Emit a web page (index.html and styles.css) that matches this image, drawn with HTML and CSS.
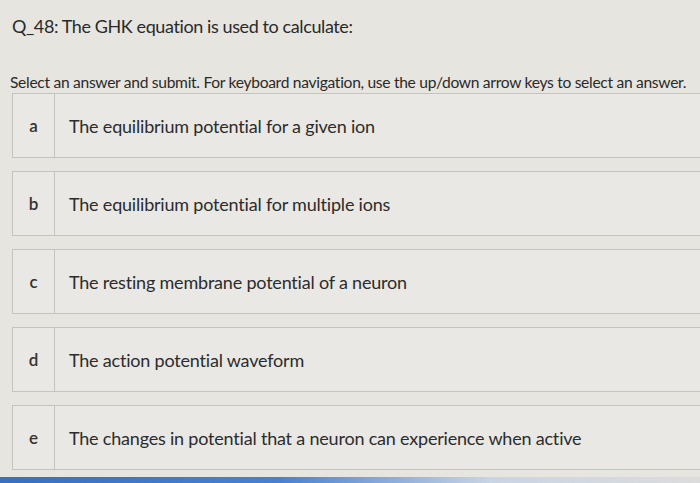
FILE: index.html
```html
<!DOCTYPE html>
<html>
<head>
<meta charset="utf-8">
<link rel="stylesheet" href="styles.css">
</head>
<body>
<div class="page">
  <h1 class="title">Q_48: The GHK equation is used to calculate:</h1>
  <p class="hint">Select an answer and submit. For keyboard navigation, use the up/down arrow keys to select an answer.</p>
  <div class="options">
    <div class="opt"><div class="key">a</div><div class="label">The equilibrium potential for a given ion</div></div>
    <div class="opt"><div class="key">b</div><div class="label">The equilibrium potential for multiple ions</div></div>
    <div class="opt"><div class="key">c</div><div class="label">The resting membrane potential of a neuron</div></div>
    <div class="opt"><div class="key">d</div><div class="label">The action potential waveform</div></div>
    <div class="opt"><div class="key">e</div><div class="label">The changes in potential that a neuron can experience when active</div></div>
  </div>
</div>
<div class="taskbar"></div>
</body>
</html>
```
FILE: styles.css
```css
html, body {
  margin: 0;
  padding: 0;
  width: 700px;
  height: 483px;
  overflow: hidden;
  background: #e7e5e0;
  font-family: Lato, "Liberation Sans", sans-serif;
  color: #2e2e2e;
}
.page {
  box-sizing: border-box;
  padding: 14px 0 0 12px;
  height: 477px;
}
.title {
  margin: 0;
  font-size: 18px;
  font-weight: 400;
  letter-spacing: -0.4px;
  line-height: 24px;
  color: #2a2a2a;
}
.hint {
  margin: 35px 0 0 -2px;
  font-size: 15.6px;
  line-height: 18px;
  letter-spacing: -0.3px;
  color: #2a2a2a;
}
.options {
  display: flex;
  flex-direction: column;
  gap: 13px;
  margin-top: 2px;
  margin-right: -20px;
}
.opt {
  display: flex;
  height: 63px;
  border: 1px solid #c4c3be;
  background: #e9e8e4;
}
.key {
  width: 41px;
  border-right: 1px solid #c4c3be;
  display: flex;
  align-items: center;
  justify-content: center;
  font-size: 17px;
  font-weight: 600;
  color: #333;
}
.label {
  display: flex;
  align-items: center;
  padding-left: 14px;
  font-size: 18px;
  letter-spacing: -0.2px;
  color: #2c2c2c;
}
.taskbar {
  height: 6px;
  background: linear-gradient(to right, #3a6fc0, #4a80d0 40%, #c9d4e4 70%, #dcdcdc);
}
```
